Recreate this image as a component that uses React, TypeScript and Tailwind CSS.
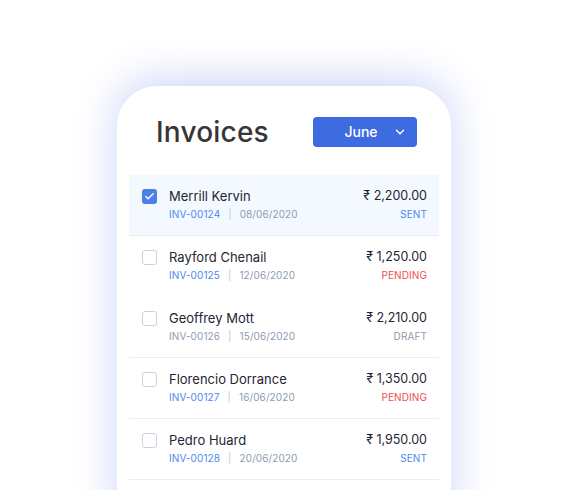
import React from 'react';
import { ChevronDown, Check } from 'lucide-react';

type Status = 'SENT' | 'PENDING' | 'DRAFT';

const invoices: { name: string; id: string; date: string; amount: string; status: Status; checked?: boolean; border: boolean }[] = [
  { name: 'Merrill Kervin', id: 'INV-00124', date: '08/06/2020', amount: '2,200.00', status: 'SENT', checked: true, border: true },
  { name: 'Rayford Chenail', id: 'INV-00125', date: '12/06/2020', amount: '1,250.00', status: 'PENDING', border: false },
  { name: 'Geoffrey Mott', id: 'INV-00126', date: '15/06/2020', amount: '2,210.00', status: 'DRAFT', border: true },
  { name: 'Florencio Dorrance', id: 'INV-00127', date: '16/06/2020', amount: '1,350.00', status: 'PENDING', border: true },
  { name: 'Pedro Huard', id: 'INV-00128', date: '20/06/2020', amount: '1,950.00', status: 'SENT', border: true },
];

const statusColor: Record<Status, string> = {
  SENT: 'text-[#4c8af0]',
  PENDING: 'text-[#f04c4c]',
  DRAFT: 'text-[#8e9bb0]',
};

const App: React.FC = () => {
  return (
    <div className="h-[490px] w-[572px] overflow-hidden bg-white font-['Inter',sans-serif]">
      <div className="pt-[86px] pl-[117px]">
        <div className="h-[440px] w-[334px] rounded-t-[40px] bg-white shadow-[0_-6px_40px_rgba(70,100,230,0.28)]">
          {/* Header */}
          <div className="flex h-[89px] items-center justify-between pl-[39px] pr-[34px] pt-[2px]">
            <h1 className="text-[28px] font-medium tracking-[0.2px] text-[#363636]">Invoices</h1>
            <button className="relative flex h-[30px] w-[104px] items-center justify-center rounded-[4px] bg-[#3e6be0] text-[14px] font-medium text-white">
              <span className="ml-[-8px]">June</span>
              <ChevronDown className="absolute right-[10px] h-[14px] w-[14px]" strokeWidth={2.5} />
            </button>
          </div>

          {/* Rows */}
          <div className="px-[12px]">
            {invoices.map((inv) => (
              <div
                key={inv.id}
                className={`flex h-[61px] items-start pt-[12px] pl-[13px] pr-[12px] ${inv.border ? 'border-b border-[#e8eef6]' : ''} ${inv.checked ? 'bg-[#f4f9ff]' : ''}`}
              >
                <div
                  className={`mt-[2px] flex h-[15px] w-[15px] shrink-0 items-center justify-center rounded-[3px] ${inv.checked ? 'bg-[#4a80ea]' : 'border border-[#c8d2e0] bg-white'}`}
                >
                  {inv.checked && <Check className="h-[11px] w-[11px] text-white" strokeWidth={3} />}
                </div>
                <div className="ml-[12px] flex-1">
                  <div className="text-[13px] leading-[18px] text-[#1f2633]">{inv.name}</div>
                  <div className="mt-[1px] flex items-center text-[10px] leading-[16px] tracking-[0.1px]">
                    <span className={inv.status === 'DRAFT' ? 'text-[#8e9bb0]' : 'text-[#4c8af0]'}>{inv.id}</span>
                    <span className="mx-[8px] text-[#c2c9d4]">|</span>
                    <span className="text-[#8e9bb0]">{inv.date}</span>
                  </div>
                </div>
                <div className="text-right">
                  <div className="text-[12.5px] leading-[18px] text-[#1f2633]">₹ {inv.amount}</div>
                  <div className={`mt-[1px] text-[10px] leading-[16px] tracking-[0.1px] ${statusColor[inv.status]}`}>{inv.status}</div>
                </div>
              </div>
            ))}
          </div>
        </div>
      </div>
    </div>
  );
};

export default App;
